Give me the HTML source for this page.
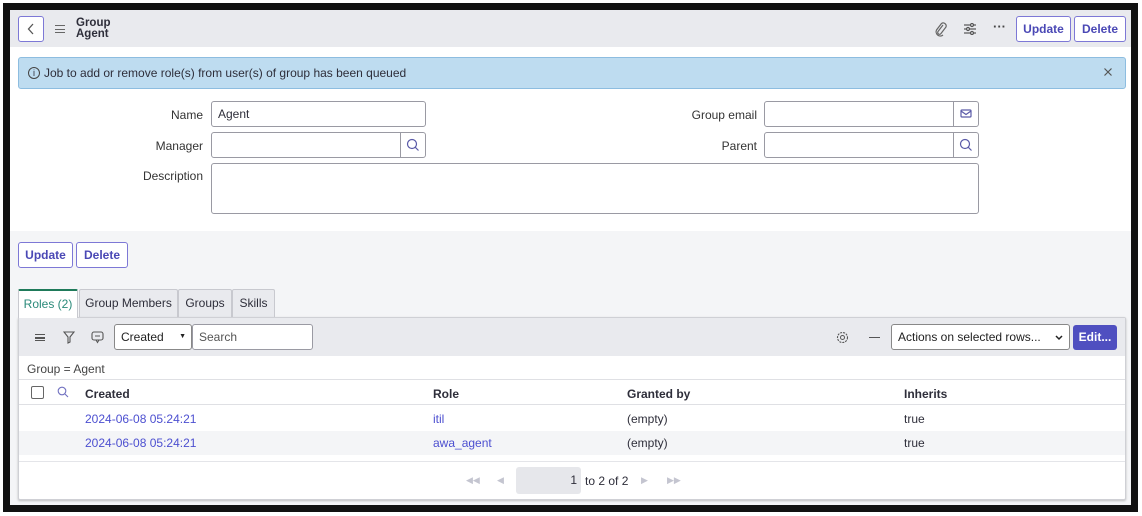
<!DOCTYPE html>
<html><head><style>
*{box-sizing:border-box;margin:0;padding:0}
body{width:1142px;height:516px;background:#fff;font-family:"Liberation Sans",sans-serif;font-size:12px;color:#2e2e3a;position:relative;overflow:hidden}
.frame{position:absolute;left:3px;top:3px;width:1135px;height:509px;background:#111;}
.content{position:absolute;left:10px;top:10px;width:1121px;height:495px;background:#f4f5f7;overflow:hidden}
.abs{position:absolute}
.hdr{left:0;top:0;width:1121px;height:37px;background:#e9eaee}
.btn{position:absolute;border:1px solid #7d78d6;border-radius:3px;background:#fff;color:#4a48b5;font-weight:bold;font-size:12px;text-align:center;line-height:24px;height:26px}
.form{left:0;top:37px;width:1121px;height:184px;background:#fff}
.lbl{position:absolute;text-align:right;font-size:12px;color:#333}
.inp{position:absolute;border:1px solid #9a9aa3;border-radius:3px;background:#fff;height:26px;font-size:12px;padding:5px 6px}
.ib{position:absolute;right:0;top:0;width:25px;height:24px;border-left:1px solid #9a9aa3}
.tab{position:absolute;top:279px;height:28px;border:1px solid #c8c9cf;border-bottom:none;background:#e9eaee;font-size:12px;text-align:center;line-height:26px;border-radius:2px 2px 0 0}
.link{color:#4c4fd0}
</style></head><body>
<div class="frame"></div>
<div class="content">
 <div class="abs hdr"></div>
 <div class="btn" style="left:8px;top:6px;width:26px;height:26px"><svg width="24" height="24" style="position:absolute;left:0;top:0"><path d="M14 7 L9.5 12 L14 17" stroke="#555" stroke-width="1.3" fill="none"/></svg></div>
 <div class="abs" style="left:45px;top:15px;width:10px;height:8px;border-top:1.5px solid #666;border-bottom:1.5px solid #666"></div>
 <div class="abs" style="left:45px;top:18.5px;width:10px;height:1.5px;background:#666"></div>
 <div class="abs" style="left:66px;top:8px;font-weight:bold;font-size:11.5px;line-height:11px;color:#2e2e3a">Group<br>Agent</div>
 <svg class="abs" style="left:923px;top:11px" width="16" height="16"><path d="M10 4 L5 10.5 A1.8 1.8 0 0 0 8 12.5 L13 6 A3 3 0 0 0 8.5 2.5 L3.5 9 A4.2 4.2 0 0 0 10 14" stroke="#666" stroke-width="1.2" fill="none"/></svg>
 <svg class="abs" style="left:953px;top:13px" width="14" height="12"><g stroke="#555" stroke-width="1.2"><line x1="1" y1="2" x2="13" y2="2"/><line x1="1" y1="6" x2="13" y2="6"/><line x1="1" y1="10" x2="13" y2="10"/><circle cx="9" cy="2" r="1.5" fill="#e9eaee"/><circle cx="5" cy="6" r="1.5" fill="#e9eaee"/><circle cx="9" cy="10" r="1.5" fill="#e9eaee"/></g></svg>
 <div class="abs" style="left:983px;top:9px;font-weight:bold;color:#444;font-size:13px">&middot;&middot;&middot;</div>
 <div class="btn" style="left:1006px;top:6px;width:55px">Update</div>
 <div class="btn" style="left:1064px;top:6px;width:52px">Delete</div>

 <div class="abs form"></div>
 <div class="abs" style="left:8px;top:47px;width:1108px;height:32px;background:#bedcf0;border:1px solid #8dbde0;border-radius:3px;font-size:12px;line-height:30px;padding-left:25px;color:#2e2e3a">Job to add or remove role(s) from user(s) of group has been queued</div>
 <div class="abs" style="left:18px;top:57px;width:12px;height:12px;border:1px solid #444;border-radius:50%;font-size:9px;line-height:10px;text-align:center">i</div>
 <svg class="abs" style="left:1093px;top:57px" width="10" height="10"><path d="M1.5 1.5 L8.5 8.5 M8.5 1.5 L1.5 8.5" stroke="#555" stroke-width="1.2"/></svg>

 <div class="lbl" style="left:100px;top:98px;width:93px">Name</div>
 <div class="inp" style="left:201px;top:91px;width:215px">Agent</div>
 <div class="lbl" style="left:100px;top:129px;width:93px">Manager</div>
 <div class="inp" style="left:201px;top:122px;width:215px"><div class="ib"><svg width="24" height="24"><circle cx="11" cy="11" r="4.5" stroke="#5a5aa8" fill="none" stroke-width="1.2"/><line x1="14.3" y1="14.3" x2="17.5" y2="17.5" stroke="#5a5aa8" stroke-width="1.2"/></svg></div></div>
 <div class="lbl" style="left:100px;top:159px;width:93px">Description</div>
 <div class="inp" style="left:201px;top:153px;width:768px;height:51px"></div>
 <div class="lbl" style="left:640px;top:98px;width:107px">Group email</div>
 <div class="inp" style="left:754px;top:91px;width:215px"><div class="ib"><svg width="24" height="24"><rect x="7" y="8" width="10" height="7" rx="1" stroke="#5a5aa8" fill="none" stroke-width="1.2"/><path d="M7 9 L12 12.5 L17 9" stroke="#5a5aa8" fill="none" stroke-width="1.2"/></svg></div></div>
 <div class="lbl" style="left:640px;top:129px;width:107px">Parent</div>
 <div class="inp" style="left:754px;top:122px;width:215px"><div class="ib"><svg width="24" height="24"><circle cx="11" cy="11" r="4.5" stroke="#5a5aa8" fill="none" stroke-width="1.2"/><line x1="14.3" y1="14.3" x2="17.5" y2="17.5" stroke="#5a5aa8" stroke-width="1.2"/></svg></div></div>

 <div class="btn" style="left:8px;top:232px;width:55px">Update</div>
 <div class="btn" style="left:66px;top:232px;width:52px">Delete</div>

 <div class="tab" style="left:8px;width:60px;background:#fff;border-top:2px solid #1f7a5a;color:#2a8a7a;height:29px;z-index:2">Roles (2)</div>
 <div class="tab" style="left:69px;width:99px">Group Members</div>
 <div class="tab" style="left:168px;width:54px">Groups</div>
 <div class="tab" style="left:222px;width:43px">Skills</div>

 <div class="abs" style="left:8px;top:307px;width:1108px;height:183px;background:#fff;border:1px solid #cfd0d5;border-radius:2px;box-shadow:0 1px 2px #bbb"></div>
 <div class="abs" style="left:9px;top:308px;width:1106px;height:38px;background:#e9eaee"></div>
 <div class="abs" style="left:25px;top:324px;width:10px;height:7px;border-top:1.5px solid #555;border-bottom:1.5px solid #555"></div>
 <div class="abs" style="left:25px;top:327px;width:10px;height:1.5px;background:#555"></div>
 <svg class="abs" style="left:53px;top:321px" width="12" height="13"><path d="M1 1 H11 L7 6 V11 L5 12 V6 Z" stroke="#555" fill="none" stroke-width="1.1"/></svg>
 <svg class="abs" style="left:81px;top:321px" width="13" height="13"><rect x="1" y="1" width="11" height="8" rx="2" stroke="#555" fill="none" stroke-width="1.1"/><path d="M5 9 L6.5 11.5 L8 9" stroke="#555" fill="none"/><line x1="4" y1="5" x2="9" y2="5" stroke="#555"/></svg>
 <div class="inp" style="left:104px;top:314px;width:78px;height:26px;color:#222;border-color:#888">Created<span style="position:absolute;right:5px;top:8px;font-size:7px">&#9660;</span></div>
 <div class="inp" style="left:182px;top:314px;width:121px;height:26px;color:#555">Search</div>
 <svg class="abs" style="left:826px;top:321px" width="13" height="13"><circle cx="6.5" cy="6.5" r="5" stroke="#555" fill="none" stroke-width="1.1" stroke-dasharray="2 1"/><circle cx="6.5" cy="6.5" r="2" stroke="#555" fill="none"/></svg>
 <div class="abs" style="left:859px;top:327px;width:11px;height:1.2px;background:#555"></div>
 <div class="inp" style="left:881px;top:314px;width:179px;height:26px;color:#222;border-color:#888">Actions on selected rows...<svg style="position:absolute;right:6px;top:10px" width="8" height="6"><path d="M1 1 L4 4 L7 1" stroke="#222" stroke-width="1.5" fill="none"/></svg></div>
 <div class="abs" style="left:1063px;top:315px;width:44px;height:25px;background:#4f4fc0;border-radius:3px;color:#fff;font-weight:bold;text-align:center;line-height:24px">Edit...</div>

 <div class="abs" style="left:17px;top:352px;color:#444">Group = Agent</div>
 <div class="abs" style="left:9px;top:369px;width:1106px;height:1px;background:#dfe0e4"></div>
 <div class="abs" style="left:9px;top:370px;width:1106px;height:25px;background:#fff;border-bottom:1px solid #dfe0e4"></div>
 <div class="abs" style="left:21px;top:376px;width:13px;height:13px;border:1px solid #666;border-radius:2px;background:#fff"></div>
 <svg class="abs" style="left:47px;top:376px" width="12" height="12"><circle cx="5" cy="5" r="3.8" stroke="#7070c0" fill="none" stroke-width="1.1"/><line x1="8" y1="8" x2="11" y2="11" stroke="#7070c0" stroke-width="1.1"/></svg>
 <div class="abs" style="left:75px;top:377px;font-weight:bold">Created</div>
 <div class="abs" style="left:423px;top:377px;font-weight:bold">Role</div>
 <div class="abs" style="left:617px;top:377px;font-weight:bold">Granted by</div>
 <div class="abs" style="left:894px;top:377px;font-weight:bold">Inherits</div>

 <div class="abs" style="left:9px;top:396px;width:1106px;height:25px;background:#fff"></div>
 <div class="abs link" style="left:75px;top:402px">2024-06-08 05:24:21</div>
 <div class="abs link" style="left:423px;top:402px">itil</div>
 <div class="abs" style="left:617px;top:402px">(empty)</div>
 <div class="abs" style="left:894px;top:402px">true</div>
 <div class="abs" style="left:9px;top:421px;width:1106px;height:24px;background:#f4f5f7"></div>
 <div class="abs link" style="left:75px;top:426px">2024-06-08 05:24:21</div>
 <div class="abs link" style="left:423px;top:426px">awa_agent</div>
 <div class="abs" style="left:617px;top:426px">(empty)</div>
 <div class="abs" style="left:894px;top:426px">true</div>
 <div class="abs" style="left:9px;top:451px;width:1106px;height:1px;background:#e4e5e9"></div>

 <div class="abs" style="left:456px;top:465px;color:#c4c5d0;font-size:9px">&#9664;&#9664;</div>
 <div class="abs" style="left:487px;top:465px;color:#c4c5d0;font-size:9px">&#9664;</div>
 <div class="abs" style="left:506px;top:457px;width:65px;height:27px;background:#e6e7eb;border-radius:3px;text-align:right;padding-right:4px;line-height:27px">1</div>
 <div class="abs" style="left:575px;top:464px">to 2 of 2</div>
 <div class="abs" style="left:631px;top:465px;color:#c4c5d0;font-size:9px">&#9654;</div>
 <div class="abs" style="left:657px;top:465px;color:#c4c5d0;font-size:9px">&#9654;&#9654;</div>
</div>
</body></html>
